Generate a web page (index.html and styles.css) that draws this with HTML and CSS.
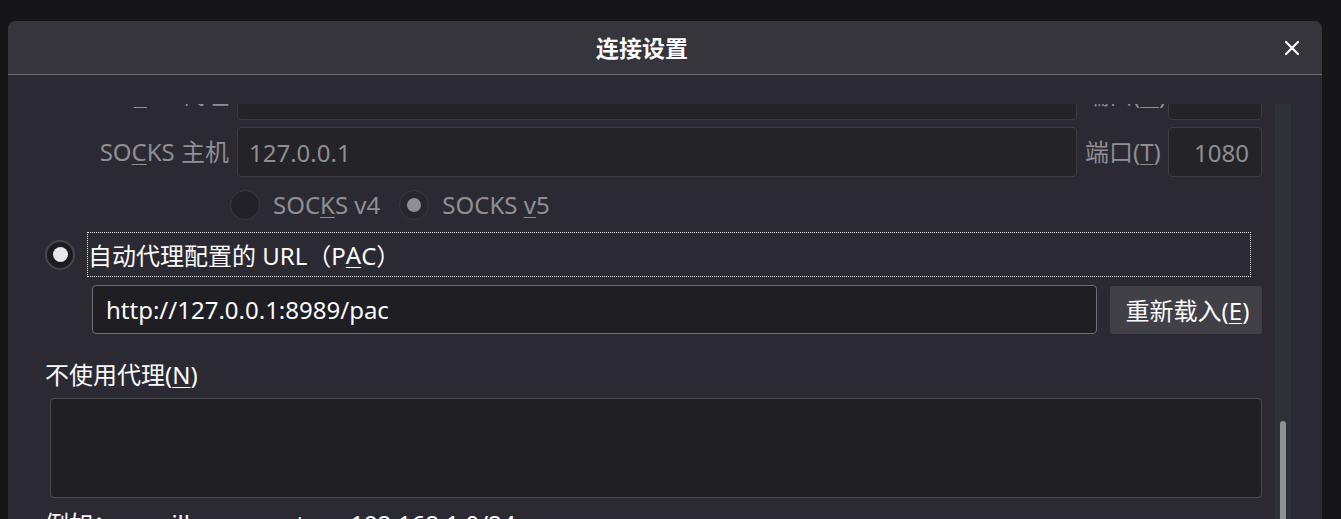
FILE: index.html
```html
<!DOCTYPE html>
<html lang="zh-CN">
<head>
<meta charset="utf-8">
<title>连接设置</title>
<link rel="stylesheet" href="styles.css">
</head>
<body>
<div class="dialog">
  <header class="dlg-head">
    <h1 class="dlg-title">连接设置</h1>
    <button class="dlg-close" aria-label="关闭">
      <svg width="16" height="16" viewBox="0 0 16 16"><path d="M2 2 L14 14 M14 2 L2 14" stroke="#fbfbfe" stroke-width="2.2" stroke-linecap="round" fill="none"/></svg>
    </button>
  </header>
  <div class="dlg-body">
    <div class="scroll">
      <div class="scroll-content">
        <div class="proxy-grid">
          <div class="grid-label">HT<u>T</u>PS 代理</div>
          <div class="field"></div>
          <div class="grid-label">端口(<u>O</u>)</div>
          <div class="field port"></div>

          <div class="grid-label">SO<u>C</u>KS 主机</div>
          <div class="field">127.0.0.1</div>
          <div class="grid-label">端口(<u>T</u>)</div>
          <div class="field port">1080</div>
        </div>

        <div class="socks-ver">
          <div class="opt"><span class="radio disabled"></span><span class="opt-label">SOC<u>K</u>S v4</span></div>
          <div class="opt"><span class="radio disabled on"></span><span class="opt-label">SOCKS <u>v</u>5</span></div>
        </div>

        <div class="pac-row">
          <span class="radio enabled on"></span>
          <span class="pac-label">自动代理配置的 URL（P<u>A</u>C）</span>
        </div>

        <div class="pac-url-row">
          <div class="field active">http://127.0.0.1:8989/pac</div>
          <button class="btn">重新载入(<u>E</u>)</button>
        </div>

        <div class="noproxy-label">不使用代理(<u>N</u>)</div>
        <div class="textarea"></div>
        <div class="hint">例如：.mozilla.org, .net.nz, 192.168.1.0/24</div>
      </div>
      <div class="scrollbar"><div class="thumb"></div></div>
    </div>
  </div>
</div>
</body>
</html>
```

FILE: styles.css
```css
html, body {
  margin: 0;
  height: 100%;
  overflow: hidden;
  background: #161618;
}

body {
  font-family: "Noto Sans", "Noto Sans CJK SC", sans-serif;
  font-size: 24px;
  color: #fbfbfe;
}

u {
  text-underline-offset: 3px;
  text-decoration-thickness: 1px;
}

.dialog {
  margin: 21px 0 0 8px;
  width: 1314px;
  height: 498px;
  background: #2b2a33;
  border-radius: 8px 8px 0 0;
  display: flex;
  flex-direction: column;
  overflow: hidden;
}

.dlg-head {
  flex: none;
  height: 54px;
  box-sizing: border-box;
  border-bottom: 1px solid #6b6a70;
  background: #36353b;
  display: flex;
  align-items: center;
  padding: 0 8px 0 6px;
}

.dlg-title {
  flex: 1;
  margin: 0;
  text-align: center;
  font-size: 23px;
  font-weight: 700;
  line-height: 30px;
}

.dlg-close {
  width: 44px;
  height: 40px;
  padding: 0;
  border: 0;
  background: none;
  display: flex;
  align-items: center;
  justify-content: center;
}

.dlg-body {
  flex: 1;
  min-height: 0;
  padding-top: 29px;
  display: flex;
}

.scroll {
  flex: 1;
  display: flex;
  padding-right: 31px;
  min-height: 0;
}

.scroll-content {
  flex: 1;
  overflow: hidden;
  padding: 0 13px 0 37px;
}

.scrollbar {
  flex: none;
  width: 16px;
  background: #2e3236;
  padding-top: 317px;
  display: flex;
  justify-content: center;
}

.thumb {
  width: 6px;
  height: 200px;
  background: #8f9094;
  border-radius: 3px 3px 0 0;
}

.proxy-grid {
  display: grid;
  grid-template-columns: 184px 1fr 75px 94px;
  column-gap: 8px;
  row-gap: 7px;
  margin-top: -34px;
}

.grid-label {
  align-self: center;
  text-align: right;
  color: #8e8e93;
  line-height: 34px;
  white-space: nowrap;
}

.field {
  height: 50px;
  box-sizing: border-box;
  border: 1px solid #3c3b41;
  border-radius: 4px;
  background: #242328;
  color: #8e8e93;
  padding: 0 12px 0 11px;
  display: flex;
  align-items: center;
  white-space: nowrap;
}

.field.port {
  justify-content: flex-end;
}

.field.active {
  flex: 1;
  height: 49px;
  border-color: #6f6e74;
  background: #1f1e23;
  color: #fbfbfe;
  padding: 0 13px;
}

.socks-ver {
  display: flex;
  align-items: center;
  height: 30px;
  margin: 13px 0 0 185px;
  gap: 19px;
}

.opt {
  display: flex;
  align-items: center;
  gap: 13px;
}

.opt-label {
  color: #8e8e93;
  line-height: 34px;
}

.radio {
  flex: none;
  width: 30px;
  height: 30px;
  box-sizing: border-box;
  border-radius: 50%;
  display: flex;
  align-items: center;
  justify-content: center;
}

.radio.disabled {
  border: 1px solid #3a3940;
  background: #222127;
}

.radio.disabled.on {
  background: #27262c;
}

.radio.enabled {
  border: 2px solid #47464c;
  background: #1c1b22;
}

.radio.on::after {
  content: "";
  width: 15px;
  height: 15px;
  border-radius: 50%;
  background: #e8e8ea;
}

.radio.disabled.on::after {
  width: 14px;
  height: 14px;
  background: #8e8e93;
}

.pac-row {
  display: flex;
  align-items: center;
  height: 45px;
  margin-top: 12px;
  gap: 12px;
}

.pac-label {
  flex: 1;
  align-self: stretch;
  box-sizing: border-box;
  border: 1px dotted #e8e8ea;
  margin-right: 11px;
  padding-left: 0;
  display: flex;
  align-items: center;
  white-space: nowrap;
}

.pac-url-row {
  display: flex;
  align-items: center;
  gap: 13px;
  margin: 8px 0 0 47px;
}

.btn {
  flex: none;
  width: 152px;
  height: 48px;
  border: 0;
  border-radius: 4px;
  background: #404046;
  color: #fbfbfe;
  font: inherit;
  padding: 0 0 0 3px;
}

.noproxy-label {
  margin-top: 24px;
  line-height: 34px;
}

.textarea {
  margin: 6px 0 0 5px;
  height: 100px;
  box-sizing: border-box;
  border: 1px solid #4a4a4f;
  border-radius: 4px;
  background: #202024;
}

.hint {
  margin-top: 9px;
  line-height: 34px;
  white-space: nowrap;
}
```
